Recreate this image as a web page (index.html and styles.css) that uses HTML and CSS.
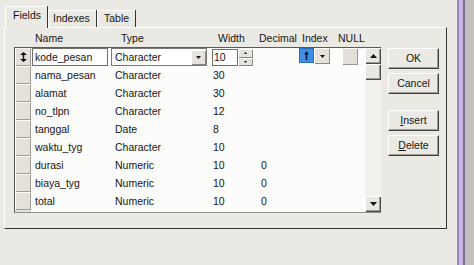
FILE: index.html
```html
<!DOCTYPE html>
<html>
<head>
<meta charset="utf-8">
<link rel="stylesheet" href="styles.css">
</head>
<body>
<div class="screen">
  <div class="dlg">
    <div class="tabs">
      <div class="tab tab-fields active">Fields</div>
      <div class="tab tab-indexes">Indexes</div>
      <div class="tab tab-table">Table</div>
    </div>
    <div class="panel">
      <div class="main">
        <div class="left">
          <div class="hdr">
            <span class="hsp"></span>
            <span class="hc h-name">Name</span>
            <span class="hc h-type">Type</span>
            <span class="hc h-width">Width</span>
            <span class="hc h-dec">Decimal</span>
            <span class="hc h-idx">Index</span>
            <span class="hc h-null">NULL</span>
          </div>
          <div class="grid">
            <div class="rowhdrs">
              <div class="rh cur"><svg width="7" height="10" viewBox="0 0 7 10"><path d="M3.5 0 L7 3 L4.2 3 L4.2 7 L7 7 L3.5 10 L0 7 L2.8 7 L2.8 3 L0 3 Z" fill="#111"/></svg></div>
              <div class="rh"></div><div class="rh"></div><div class="rh"></div><div class="rh"></div>
              <div class="rh"></div><div class="rh"></div><div class="rh"></div><div class="rh"></div>
            </div>
            <div class="rows">
              <div class="row">
                <div class="c"><div class="edit">kode_pesan</div></div>
                <div class="c"><div class="combo"><span class="combo-t">Character</span><span class="dd"><svg width="5" height="3" viewBox="0 0 5 3"><path d="M0 0H5L2.5 3Z" fill="#111"/></svg></span></div></div>
                <div class="c"><div class="spin"><span class="spin-t">10</span><span class="spin-b"><span class="sb"><svg width="3" height="2" viewBox="0 0 3 2"><path d="M0 2H3L1.5 0Z" fill="#111"/></svg></span><span class="sb"><svg width="3" height="2" viewBox="0 0 3 2"><path d="M0 0H3L1.5 2Z" fill="#111"/></svg></span></span></div></div>
                <div class="c"></div>
                <div class="c"><div class="idx"><span class="idx-v"><svg width="5" height="9" viewBox="0 0 5 9"><path d="M2.5 0 L5 3.5 L3.3 3.5 L3.3 9 L1.7 9 L1.7 3.5 L0 3.5 Z" fill="#0a1a40"/></svg></span><span class="dd2"><svg width="5" height="3" viewBox="0 0 5 3"><path d="M0 0H5L2.5 3Z" fill="#111"/></svg></span></div></div>
                <div class="c"><div class="nullbox"></div></div>
              </div>
              <div class="row"><div class="c t-name">nama_pesan</div><div class="c t-type">Character</div><div class="c t-w">30</div><div class="c t-d"></div><div class="c"></div><div class="c"></div></div>
              <div class="row"><div class="c t-name">alamat</div><div class="c t-type">Character</div><div class="c t-w">30</div><div class="c t-d"></div><div class="c"></div><div class="c"></div></div>
              <div class="row"><div class="c t-name">no_tlpn</div><div class="c t-type">Character</div><div class="c t-w">12</div><div class="c t-d"></div><div class="c"></div><div class="c"></div></div>
              <div class="row"><div class="c t-name">tanggal</div><div class="c t-type">Date</div><div class="c t-w">8</div><div class="c t-d"></div><div class="c"></div><div class="c"></div></div>
              <div class="row"><div class="c t-name">waktu_tyg</div><div class="c t-type">Character</div><div class="c t-w">10</div><div class="c t-d"></div><div class="c"></div><div class="c"></div></div>
              <div class="row"><div class="c t-name">durasi</div><div class="c t-type">Numeric</div><div class="c t-w">10</div><div class="c t-d">0</div><div class="c"></div><div class="c"></div></div>
              <div class="row"><div class="c t-name">biaya_tyg</div><div class="c t-type">Numeric</div><div class="c t-w">10</div><div class="c t-d">0</div><div class="c"></div><div class="c"></div></div>
              <div class="row"><div class="c t-name">total</div><div class="c t-type">Numeric</div><div class="c t-w">10</div><div class="c t-d">0</div><div class="c"></div><div class="c"></div></div>
            </div>
            <div class="vscroll">
              <div class="sbtn"><svg width="7" height="4" viewBox="0 0 7 4"><path d="M0 4H7L3.5 0Z" fill="#111"/></svg></div>
              <div class="thumb"></div>
              <div class="track"></div>
              <div class="sbtn"><svg width="7" height="4" viewBox="0 0 7 4"><path d="M0 0H7L3.5 4Z" fill="#111"/></svg></div>
            </div>
          </div>
        </div>
        <div class="btns">
          <div class="btn">OK</div>
          <div class="btn b-cancel">Cancel</div>
          <div class="btn b-insert"><u>I</u>nsert</div>
          <div class="btn b-delete"><u>D</u>elete</div>
        </div>
      </div>
    </div>
  </div>
  <div class="edge"></div>
</div>
</body>
</html>
```
FILE: styles.css
```css
html, body { margin: 0; padding: 0; }
body { background: #ebe9e4; }
.screen {
  display: flex;
  width: 474px;
  height: 265px;
  overflow: hidden;
  background: #ebe9e4;
  font-family: "Liberation Sans", Arial, sans-serif;
  font-size: 10.5px;
  color: #151515;
}
.dlg { width: 457px; }
.tabs {
  display: flex;
  align-items: flex-end;
  height: 27px;
  padding-left: 5px;
}
.tab {
  box-sizing: border-box;
  height: 17px;
  line-height: 16px;
  border-right: 1px solid #333;
  box-shadow: inset 1px 1px 0 #fff;
  background: #ebe9e4;
}
.tab.active {
  height: 22px;
  line-height: 18px;
  margin-bottom: -1px;
  position: relative;
  z-index: 2;
}
.tab-fields { width: 43px; padding-left: 8px; }
.tab-indexes { width: 49px; padding-left: 5px; }
.tab-table { width: 39px; padding-left: 7px; }
.panel {
  margin-left: 4px;
  width: 441px;
  height: 200px;
  border: 1px solid;
  border-color: #fff #333 #333 #fff;
}
.main { display: flex; padding-left: 9px; }
.left { width: 367px; }
.hdr {
  display: flex;
  align-items: flex-end;
  height: 19px;
}
.hc { display: block; line-height: 14px; padding-bottom: 2px; box-sizing: border-box; }
.hsp { width: 17px; }
.h-name { width: 77px; padding-left: 4px; }
.h-type { width: 100px; padding-left: 13px; }
.h-width { width: 48px; padding-left: 10px; }
.h-dec { width: 42px; padding-left: 3px; }
.h-idx { width: 40px; padding-left: 4px; }
.h-null { width: 27px; padding-left: 0; }
.grid {
  display: flex;
  height: 164px;
  border-top: 1px solid #5a5a5a;
  border-left: 1px solid #5a5a5a;
  border-bottom: 1px solid #8f8f8f;
}
.rowhdrs { width: 16px; background: #e4e1da; }
.rh {
  box-sizing: border-box;
  height: 18px;
  background: #e4e1da;
  box-shadow: inset 1px 1px 0 #fbfaf7, inset -1px -1px 0 #a09d96;
  display: flex;
  align-items: center;
  justify-content: center;
}
.rows { width: 334px; background: #fcfcfb; }
.row {
  display: grid;
  grid-template-columns: 77px 100px 48px 42px 40px 27px;
  height: 18px;
  line-height: 18px;
}
.c { white-space: nowrap; }
.t-name { padding-left: 4px; }
.t-type { padding-left: 7px; }
.t-w { padding-left: 5px; }
.t-d { padding-left: 5px; }
.edit {
  box-sizing: border-box;
  margin-left: 1px;
  width: 76px;
  height: 18px;
  border: 1px solid #6e6e6e;
  background: #fff;
  padding-left: 2px;
  line-height: 16px;
}
.combo {
  box-sizing: border-box;
  display: flex;
  margin-left: 3px;
  width: 96px;
  height: 18px;
  border: 1px solid #7a7a7a;
  background: #fff;
}
.combo-t { flex: 1; padding-left: 3px; line-height: 16px; }
.dd {
  box-sizing: border-box;
  width: 15px;
  height: 15px;
  margin: 1px 0 0 0;
  background: #e6e3dc;
  box-shadow: inset 1px 1px 0 #fff, inset -1px -1px 0 #8a8780;
  display: flex;
  align-items: center;
  justify-content: center;
}
.spin {
  display: flex;
  margin-left: 4px;
  margin-top: 1px;
  height: 17px;
}
.spin-t {
  box-sizing: border-box;
  width: 26px;
  height: 17px;
  border: 1px solid #6e6e6e;
  background: #fff;
  padding-left: 1px;
  line-height: 15px;
}
.spin-b { display: flex; flex-direction: column; width: 15px; height: 17px; }
.sb {
  box-sizing: border-box;
  height: 8.5px;
  background: #e6e3dc;
  box-shadow: inset 1px 1px 0 #fff, inset -1px -1px 0 #8a8780;
  display: flex;
  align-items: center;
  justify-content: center;
}
.idx { display: flex; margin-left: 1px; }
.idx-v {
  box-sizing: border-box;
  width: 15px;
  height: 15px;
  background: #3f8fe6;
  border: 1px solid #2a6cc0;
  display: flex;
  align-items: center;
  justify-content: center;
}
.dd2 {
  box-sizing: border-box;
  width: 16px;
  height: 16px;
  background: #e6e3dc;
  box-shadow: inset 1px 1px 0 #fff, inset -1px -1px 0 #8a8780;
  display: flex;
  align-items: center;
  justify-content: center;
}
.nullbox {
  box-sizing: border-box;
  margin-left: 4px;
  width: 16px;
  height: 17px;
  background: #e2dfd8;
  box-shadow: inset 1px 1px 0 #fff, inset -1px -1px 0 #9a978f;
}
.vscroll {
  width: 16px;
  display: flex;
  flex-direction: column;
  background: #f2f1ed;
}
.sbtn, .thumb {
  box-sizing: border-box;
  height: 16px;
  background: #e9e7e1;
  box-shadow: inset 1px 1px 0 #fff, inset -1px -1px 0 #4a4a4a, inset -2px -2px 0 #a09d96;
  display: flex;
  align-items: center;
  justify-content: center;
}
.track { flex: 1; }
.btns {
  margin-left: 7px;
  margin-top: 20px;
  width: 51px;
}
.btn {
  box-sizing: border-box;
  height: 21px;
  line-height: 19px;
  text-align: center;
  background: #ebe9e4;
  border: 1px solid;
  border-color: #fff #404040 #404040 #fff;
  box-shadow: inset -1px -1px 0 #a09d96;
}
.b-cancel { margin-top: 4px; }
.b-insert { margin-top: 16px; }
.b-delete { margin-top: 4px; }
.edge {
  flex: 1;
  background: linear-gradient(to right, #9a82bc 0 2px, #c8b6de 2px 6px, #7c6c90 6px 8px, #c4c1bc 8px 17px);
}
```
